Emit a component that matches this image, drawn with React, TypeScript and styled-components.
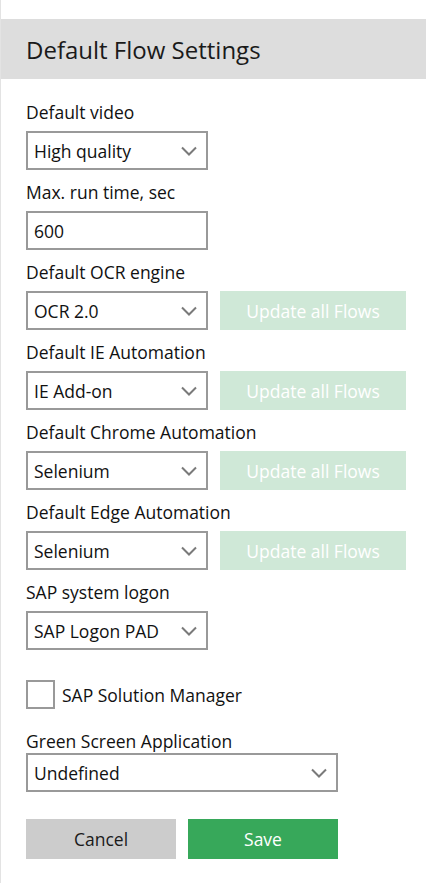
import React from "react";
import styled, { createGlobalStyle } from "styled-components";

const GlobalStyle = createGlobalStyle`
  html, body {
    margin: 0;
    padding: 0;
    background: #ffffff;
  }
  body {
    font-family: "Open Sans", "Noto Sans", sans-serif;
    color: #111111;
  }
`;

type FieldProps = { label: string; value: string; wide?: boolean; update?: boolean; tight?: boolean };

const Panel = styled.div`
  box-sizing: border-box;
  min-height: 883px;
  padding-top: 19px;
  border-left: 1px solid #e3e3e3;
`;

const Header = styled.h1`
  margin: 0;
  height: 60px;
  display: flex;
  align-items: center;
  padding-left: 25px;
  background: #dddddd;
  font-size: 24px;
  font-weight: 400;
  color: #1a1a1a;
`;

const Body = styled.div`
  display: flex;
  flex-direction: column;
  padding: 11px 0 0 25px;
`;

const Group = styled.div<{ $tight?: boolean }>`
  display: flex;
  flex-direction: column;
  margin-top: ${(p) => (p.$tight ? "0" : "11px")};
`;

const Label = styled.label<{ $tight?: boolean }>`
  font-size: 17.5px;
  line-height: 22px;
  margin-bottom: ${(p) => (p.$tight ? "1px" : "8px")};
`;

const Row = styled.div`
  display: flex;
  gap: 12px;
`;

const SelectBox = styled.div<{ $wide?: boolean }>`
  box-sizing: border-box;
  width: ${(p) => (p.$wide ? "312px" : "182px")};
  height: 39px;
  border: 2px solid #999999;
  display: flex;
  align-items: center;
  justify-content: space-between;
  padding: 0 8px 0 6px;
  font-size: 17.5px;
  background: #ffffff;
`;

const Chevron = () => (
  <svg width="18" height="10" viewBox="0 0 18 10">
    <path d="M2 1.5 L9 8.5 L16 1.5" fill="none" stroke="#7a7a7a" strokeWidth="2" />
  </svg>
);

const TextInput = styled.div`
  box-sizing: border-box;
  width: 182px;
  height: 39px;
  border: 2px solid #999999;
  display: flex;
  align-items: center;
  padding-left: 6px;
  font-size: 17.5px;
`;

const UpdateButton = styled.button`
  box-sizing: border-box;
  width: 186px;
  height: 39px;
  border: none;
  background: #cfe8d7;
  color: #ffffff;
  font-family: inherit;
  font-size: 17.5px;
  padding: 0;
`;

const CheckRow = styled.div`
  display: flex;
  align-items: center;
  gap: 7px;
  margin: 30px 0 21px;
  font-size: 17.5px;
`;

const Box = styled.span`
  box-sizing: border-box;
  width: 29px;
  height: 29px;
  border: 2px solid #999999;
  background: #ffffff;
`;

const Actions = styled.div`
  display: flex;
  gap: 12px;
  margin-top: 27px;
`;

const ActionButton = styled.button<{ $primary?: boolean }>`
  width: 150px;
  height: 40px;
  border: none;
  padding: 0;
  font-family: inherit;
  font-size: 17.5px;
  background: ${(p) => (p.$primary ? "#37a85a" : "#cccccc")};
  color: ${(p) => (p.$primary ? "#ffffff" : "#1a1a1a")};
`;

const Field = ({ label, value, wide, update, tight }: FieldProps) => (
  <Group $tight={tight}>
    <Label $tight={tight}>{label}</Label>
    <Row>
      <SelectBox $wide={wide}>
        <span>{value}</span>
        <Chevron />
      </SelectBox>
      {update && <UpdateButton>Update all Flows</UpdateButton>}
    </Row>
  </Group>
);

export default function App() {
  return (
    <Panel>
      <GlobalStyle />
      <Header>Default Flow Settings</Header>
      <Body>
        <Field label="Default video" value="High quality" />
        <Group>
          <Label>Max. run time, sec</Label>
          <TextInput>600</TextInput>
        </Group>
        <Field label="Default OCR engine" value="OCR 2.0" update />
        <Field label="Default IE Automation" value="IE Add-on" update />
        <Field label="Default Chrome Automation" value="Selenium" update />
        <Field label="Default Edge Automation" value="Selenium" update />
        <Field label="SAP system logon" value="SAP Logon PAD" />
        <CheckRow>
          <Box />
          <span>SAP Solution Manager</span>
        </CheckRow>
        <Field label="Green Screen Application" value="Undefined" wide tight />
        <Actions>
          <ActionButton>Cancel</ActionButton>
          <ActionButton $primary>Save</ActionButton>
        </Actions>
      </Body>
    </Panel>
  );
}
